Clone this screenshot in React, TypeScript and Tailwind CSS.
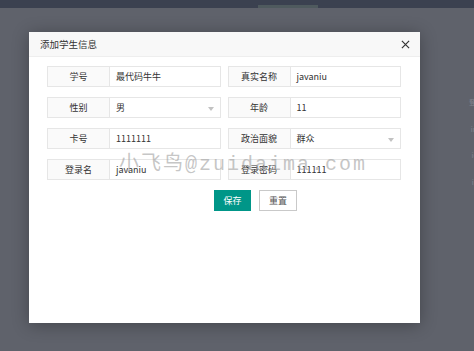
import type { ReactNode } from "react";

type Field = { label: string; value: string; select?: boolean };

const rows: [Field, Field][] = [
  [
    { label: "学号", value: "最代码牛牛" },
    { label: "真实名称", value: "javaniu" },
  ],
  [
    { label: "性别", value: "男", select: true },
    { label: "年龄", value: "11" },
  ],
  [
    { label: "卡号", value: "1111111" },
    { label: "政治面貌", value: "群众", select: true },
  ],
  [
    { label: "登录名", value: "javaniu" },
    { label: "登录密码", value: "111111" },
  ],
];

function FormItem({ label, value, select }: Field) {
  return (
    <div className="flex h-[21px]">
      <div className="flex w-[63px] shrink-0 items-center justify-center border border-[#e6e6e6] bg-[#fafafa] text-[9px] text-[#333]">
        {label}
      </div>
      <div className="relative flex flex-1 items-center border border-l-0 border-[#e6e6e6] bg-white pl-[6px] text-[9px] text-[#333]">
        {value}
        {select && (
          <span className="absolute right-[6px] top-[9px] h-0 w-0 border-x-[3.5px] border-t-[4px] border-x-transparent border-t-[#c2c2c2]" />
        )}
      </div>
    </div>
  );
}

function Button({ children, primary }: { children: ReactNode; primary?: boolean }) {
  return (
    <button
      className={
        primary
          ? "h-[21px] w-[37px] bg-[#009688] text-[9px] text-white"
          : "h-[21px] w-[38px] border border-[#c9c9c9] bg-white text-[9px] text-[#555]"
      }
    >
      {children}
    </button>
  );
}

export default function App() {
  return (
    <div
      className="relative h-[351px] w-[474px] overflow-hidden bg-[#5f626b]"
      style={{ fontFamily: '"Noto Sans CJK SC", "Liberation Sans", sans-serif' }}
    >
      <div className="flex h-[8px] bg-[#3b4150]">
        <div className="ml-[258px] mt-[5px] h-[3px] w-[60px] bg-[#4f5a5e]" />
      </div>

      <div className="flex flex-col items-end gap-[16px] pt-[89px] text-[7px] text-[#80838b]">
        <span className="-mr-[2px]">登</span>
        <span className="-mr-[3px]">in</span>
        <span className="-mr-[3px]">ic</span>
        <span className="-mr-[3px]">is</span>
      </div>

      <div className="absolute left-[29px] top-[32px] flex h-[291px] w-[391px] flex-col bg-white shadow-[0_2px_16px_rgba(0,0,0,0.3)]">
        <div className="flex h-[25px] shrink-0 items-center justify-between border-b border-[#eee] bg-[#f8f8f8] pl-[11px] pr-[10px]">
          <span className="text-[9.5px] text-[#333]">添加学生信息</span>
          <svg width="9" height="9" viewBox="0 0 10 10" className="text-[#333]">
            <path d="M1 1 L9 9 M9 1 L1 9" stroke="currentColor" strokeWidth="1.3" />
          </svg>
        </div>

        <div className="flex flex-col gap-[10px] pl-[18px] pr-[19px] pt-[9px]">
          {rows.map(([a, b]) => (
            <div key={a.label} className="grid grid-cols-2 gap-[7px]">
              <FormItem {...a} />
              <FormItem {...b} />
            </div>
          ))}
        </div>

        <div className="mt-[10px] flex gap-[8px] pl-[185px]">
          <Button primary>保存</Button>
          <Button>重置</Button>
        </div>
      </div>

      <div
        className="pointer-events-none absolute left-[119px] top-[150px] whitespace-nowrap text-[20px] tracking-[2px] text-[rgba(160,160,160,0.6)]"
        style={{ fontFamily: '"Liberation Mono", "Noto Sans CJK SC", monospace' }}
      >
        小飞鸟@zuidaima.com
      </div>
    </div>
  );
}
